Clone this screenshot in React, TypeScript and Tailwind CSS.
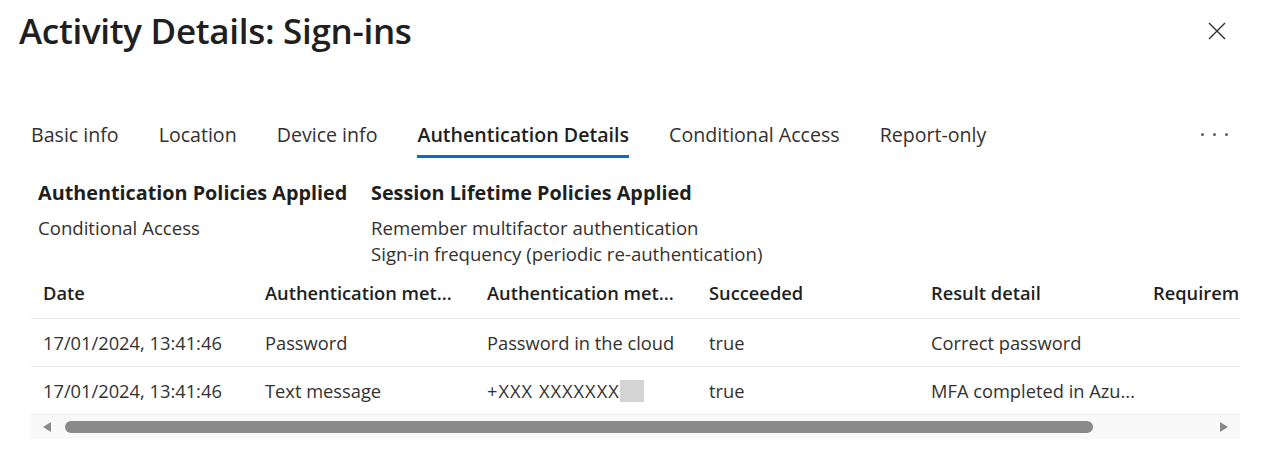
import React from "react";

const tabs = [
  "Basic info",
  "Location",
  "Device info",
  "Authentication Details",
  "Conditional Access",
  "Report-only",
];

const cols = [
  "Date",
  "Authentication met...",
  "Authentication met...",
  "Succeeded",
  "Result detail",
  "Requirement",
];

const rows = [
  ["17/01/2024, 13:41:46", "Password", "Password in the cloud", "true", "Correct password", ""],
  ["17/01/2024, 13:41:46", "Text message", "+XXX XXXXXXX", "true", "MFA completed in Azu...", ""],
];

export default function App() {
  return (
    <div
      className="w-[1271px] h-[453px] bg-white overflow-hidden text-[#323130]"
      style={{ fontFamily: '"Open Sans", "Noto Sans", sans-serif' }}
    >
      <div className="flex items-start justify-between pl-[19px] pr-[45px]">
        <h1 className="mt-[10px] text-[35px] leading-[42px] font-semibold text-[#201f1e] tracking-[-0.3px]">
          Activity Details: Sign-ins
        </h1>
        <button className="mt-[22px] w-[18px] h-[18px] text-[#323130]">
          <svg viewBox="0 0 18 18" width="18" height="18" fill="none" stroke="currentColor" strokeWidth="1.4">
            <path d="M1 1 L17 17 M17 1 L1 17" />
          </svg>
        </button>
      </div>

      <div className="mt-[59px] flex items-stretch h-[48px] pl-[31px] pr-[43px]">
        <div className="flex gap-[40px]">
          {tabs.map((t) => {
            const active = t === "Authentication Details";
            return (
              <div key={t} className="relative flex items-center">
                <span
                  className={
                    "text-[19.6px] leading-[26px] whitespace-nowrap " +
                    (active ? "font-semibold text-[#201f1e]" : "text-[#323130]")
                  }
                >
                  {t}
                </span>
                {active && (
                  <div className="absolute left-0 right-0 bottom-[1px] h-[3px] bg-[#0f6cbd]" />
                )}
              </div>
            );
          })}
        </div>
        <div className="ml-auto flex items-center gap-[9px] pb-[1px]">
          <span className="w-[3px] h-[3px] rounded-full bg-[#605e5c]" />
          <span className="w-[3px] h-[3px] rounded-full bg-[#605e5c]" />
          <span className="w-[3px] h-[3px] rounded-full bg-[#605e5c]" />
        </div>
      </div>

      <div className="mt-[21px] pl-[38px] flex text-[18.6px] leading-[26px]">
        <div className="w-[333px]">
          <div className="font-bold text-[19.8px] text-[#201f1e]">Authentication Policies Applied</div>
          <div className="mt-[9px]">Conditional Access</div>
        </div>
        <div>
          <div className="font-bold text-[19.8px] text-[#201f1e]">Session Lifetime Policies Applied</div>
          <div className="mt-[9px]">Remember multifactor authentication</div>
          <div>Sign-in frequency (periodic re-authentication)</div>
        </div>
      </div>

      <div className="ml-[31px] w-[1209px] overflow-hidden">
        <div className="flex h-[52px] items-center border-b border-[#edebe9] w-[1332px]">
          {cols.map((c, i) => (
            <div
              key={i}
              className="w-[222px] shrink-0 pl-[12px] pt-[1px] text-[18.3px] font-semibold text-[#201f1e] whitespace-nowrap"
            >
              {c}
            </div>
          ))}
        </div>
        {rows.map((r, ri) => (
          <div key={ri} className="flex h-[48px] items-center border-b border-[#edebe9] w-[1332px]">
            {r.map((v, i) => (
              <div
                key={i}
                className="w-[222px] shrink-0 pl-[12px] text-[18.3px] text-[#323130] whitespace-nowrap flex items-center"
              >
                <span className={ri === 1 && i === 2 ? "tracking-[1px]" : ""}>{v}</span>
                {ri === 1 && i === 2 && (
                  <span className="inline-block w-[24px] h-[22px] bg-[#d4d4d4]" />
                )}
              </div>
            ))}
          </div>
        ))}
        <div className="h-[24px] bg-[#f9f9f9] flex items-center px-[12px]">
          <svg width="8" height="10" viewBox="0 0 8 10" className="shrink-0">
            <path d="M8 0 L0 5 L8 10 Z" fill="#8a8a8a" />
          </svg>
          <div className="ml-[14px] w-[1028px] h-[12px] rounded-full bg-[#8a8a8a]" />
          <svg width="8" height="10" viewBox="0 0 8 10" className="shrink-0 ml-auto">
            <path d="M0 0 L8 5 L0 10 Z" fill="#8a8a8a" />
          </svg>
        </div>
      </div>
    </div>
  );
}
